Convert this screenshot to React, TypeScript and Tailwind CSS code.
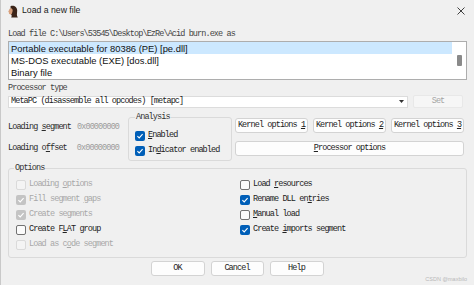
import type { ReactNode } from 'react'

const MONO = "font-['Liberation_Mono','DejaVu_Sans_Mono',monospace] text-[8.5px] leading-[9px] tracking-[-0.9px]"
const SANS = "font-['Liberation_Sans',Arial,sans-serif]"

function AppIcon() {
  return (
    <svg width="13" height="13" viewBox="0 0 13 13">
      <path
        d="M4.5 1.2C7.5 0 11.2 1.6 11.2 5.6C11.2 8.4 10.2 10.2 11.8 12.6L5.2 12.6C6 11.2 5.8 10.2 5 9.6Z"
        fill="#3b2418"
      />
      <path
        d="M4.6 3.2C3.2 3.8 2.8 5.4 2.2 7.1L3.1 7.5L2.9 8.7C3.6 9.3 4.4 9.1 5.1 9.6C6.1 8.8 6.2 7.4 6.6 6C7 4.4 5.9 2.8 4.6 3.2Z"
        fill="#d8a07c"
      />
    </svg>
  )
}

function Check({ checked, disabled }: { checked?: boolean; disabled?: boolean }) {
  if (checked) {
    return (
      <span
        className={`flex h-[10px] w-[10px] flex-shrink-0 items-center justify-center rounded-[2px] ${
          disabled ? 'bg-[#c4c4c4]' : 'bg-[#005fb8]'
        }`}
      >
        <svg width="8" height="8" viewBox="0 0 8 8">
          <path d="M1.4 4.1L3.2 5.9L6.6 2.2" fill="none" stroke="#fff" strokeWidth="1.1" />
        </svg>
      </span>
    )
  }
  return (
    <span
      className={`h-[10px] w-[10px] flex-shrink-0 rounded-[2px] border ${
        disabled ? 'border-[#dadada] bg-[#f4f4f4]' : 'border-[#727272] bg-[#fbfbfb]'
      }`}
    />
  )
}

function CheckRow({
  checked,
  disabled,
  children,
}: {
  checked?: boolean
  disabled?: boolean
  children: ReactNode
}) {
  return (
    <div className="flex h-[15px] items-center gap-[3px]">
      <Check checked={checked} disabled={disabled} />
      <span className={disabled ? 'text-[#a8a8a8]' : 'text-[#222]'}>{children}</span>
    </div>
  )
}

function Btn({ children, className = '' }: { children: ReactNode; className?: string }) {
  return (
    <div
      className={`flex h-[15px] items-center justify-center rounded-[3px] border border-[#d3d3d3] bg-[#fdfdfd] text-[#222] ${className}`}
    >
      <span>{children}</span>
    </div>
  )
}

export default function App() {
  return (
    <div className="relative h-[285px] w-[474px] overflow-hidden border-l border-[#c9c9c9] bg-[#f0f0f0] text-[#1c1c1c]">
      {/* Barre de titre */}
      <div className="flex h-[22px] items-center pl-[5px] pr-[9px]">
        <AppIcon />
        <span className={`${SANS} ml-[3px] text-[8.7px] text-[#1a1a1a]`}>Load a new file</span>
        <svg className="ml-auto" width="8" height="8" viewBox="0 0 8 8">
          <path d="M0.5 0.5L7.5 7.5M7.5 0.5L0.5 7.5" stroke="#2b2b2b" strokeWidth="0.9" />
        </svg>
      </div>

      <div className={`px-[7px] ${MONO}`}>
        <div className="mt-[8px] text-[#444]">Load file C:\Users\53545\Desktop\EzRe\Acid burn.exe as</div>

        {/* Liste des formats */}
        <div className={`${SANS} mt-[2px] flex h-[39px] border border-[#adadad] bg-white text-[9.4px] tracking-normal text-[#111]`}>
          <div className="flex-1">
            <div className="flex h-[12px] items-center bg-[#cce8ff] pl-[2px]">
              Portable executable for 80386 (PE) [pe.dll]
            </div>
            <div className="flex h-[12.5px] items-center pl-[2px]">MS-DOS executable (EXE) [dos.dll]</div>
            <div className="flex h-[12.5px] items-center pl-[2px]">Binary file</div>
          </div>
          <div className="flex w-[14px] justify-center">
            <div className="mt-[13px] h-[11px] w-[5px] rounded-[1px] bg-[#8a8a8a]" />
          </div>
        </div>

        <div className="mt-[4px] text-[#444]">Processor type</div>

        <div className="mt-[2px] flex h-[13px] items-center">
          <div className="flex h-[12px] w-[400px] items-center border border-[#dcdcdc] bg-white pl-[2px] pr-[3px]">
            <span className="flex-1 text-[#222]">MetaPC (disassemble all opcodes) [metapc]</span>
            <svg width="5" height="3" viewBox="0 0 5 3">
              <path d="M0 0H5L2.5 3Z" fill="#333" />
            </svg>
          </div>
          <div className="ml-[5px] flex h-[13px] w-[50px] items-center justify-center rounded-[2px] border border-[#e8e8e8] bg-[#f6f6f6] text-[#a5a5a5]">
            Set
          </div>
        </div>

        {/* Segment / analyse / options noyau */}
        <div className="mt-[9px] flex">
          <div className="flex w-[120px] flex-col gap-[10px] pt-[5px]">
            <div className="flex h-[11px] items-center gap-[6px]">
              <span className="text-[#2a2a2a]">
                Loading <u>s</u>egment
              </span>
              <span className="text-[#9c9c9c]">0x00000000</span>
            </div>
            <div className="flex h-[11px] items-center gap-[10px]">
              <span className="text-[#2a2a2a]">
                Loading o<u>f</u>fset
              </span>
              <span className="text-[#9c9c9c]">0x00000000</span>
            </div>
          </div>

          <div className="h-[44px] w-[104px] rounded-[3px] border border-[#dadada] pl-[6px]">
            <div className="-mt-[5px] w-fit bg-[#f0f0f0] px-[1px] text-[#333]">Analysis</div>
            <div className="mt-[6px] flex flex-col">
              <CheckRow checked>
                <u>E</u>nabled
              </CheckRow>
              <CheckRow checked>
                In<u>d</u>icator enabled
              </CheckRow>
            </div>
          </div>

          <div className="ml-[3px] mt-[1px] flex w-[229px] flex-col gap-[8px]">
            <div className="flex gap-[5px]">
              <Btn className="w-[73px]">
                Kernel options <u>1</u>
              </Btn>
              <Btn className="w-[73px]">
                Kernel options <u>2</u>
              </Btn>
              <Btn className="w-[73px]">
                Kernel options <u>3</u>
              </Btn>
            </div>
            <Btn>
              <u>P</u>rocessor options
            </Btn>
          </div>
        </div>

        {/* Options */}
        <div className="mt-[7px] h-[90px] rounded-[3px] border border-[#dadada] pl-[7px]">
          <div className="-mt-[6px] ml-[-2px] w-fit bg-[#f0f0f0] px-[1px] leading-[10px] text-[#333]">Options</div>
          <div className="mt-[4px] flex">
            <div className="flex w-[224px] flex-col">
              <CheckRow disabled>
                Loading <u>o</u>ptions
              </CheckRow>
              <CheckRow checked disabled>
                Fill segment <u>g</u>aps
              </CheckRow>
              <CheckRow checked disabled>
                Create segments
              </CheckRow>
              <CheckRow>
                Create F<u>L</u>AT group
              </CheckRow>
              <CheckRow disabled>
                Load as c<u>o</u>de segment
              </CheckRow>
            </div>
            <div className="flex flex-col">
              <CheckRow>
                Load <u>r</u>esources
              </CheckRow>
              <CheckRow checked>
                Rename DLL en<u>t</u>ries
              </CheckRow>
              <CheckRow>
                <u>M</u>anual load
              </CheckRow>
              <CheckRow checked>
                Create <u>i</u>mports segment
              </CheckRow>
            </div>
          </div>
        </div>

        <div className="mt-[3px] flex justify-center gap-[6px] pr-[1px]">
          <Btn className="w-[54px] border-[#86acd8] bg-[#fbfdff]">OK</Btn>
          <Btn className="w-[53px]">Cancel</Btn>
          <Btn className="w-[54px]">Help</Btn>
        </div>
      </div>

      <div className={`${SANS} absolute bottom-[2px] right-[7px] text-[5.5px] text-[#b8b8b8]`}>CSDN @maxbilo</div>
    </div>
  )
}
